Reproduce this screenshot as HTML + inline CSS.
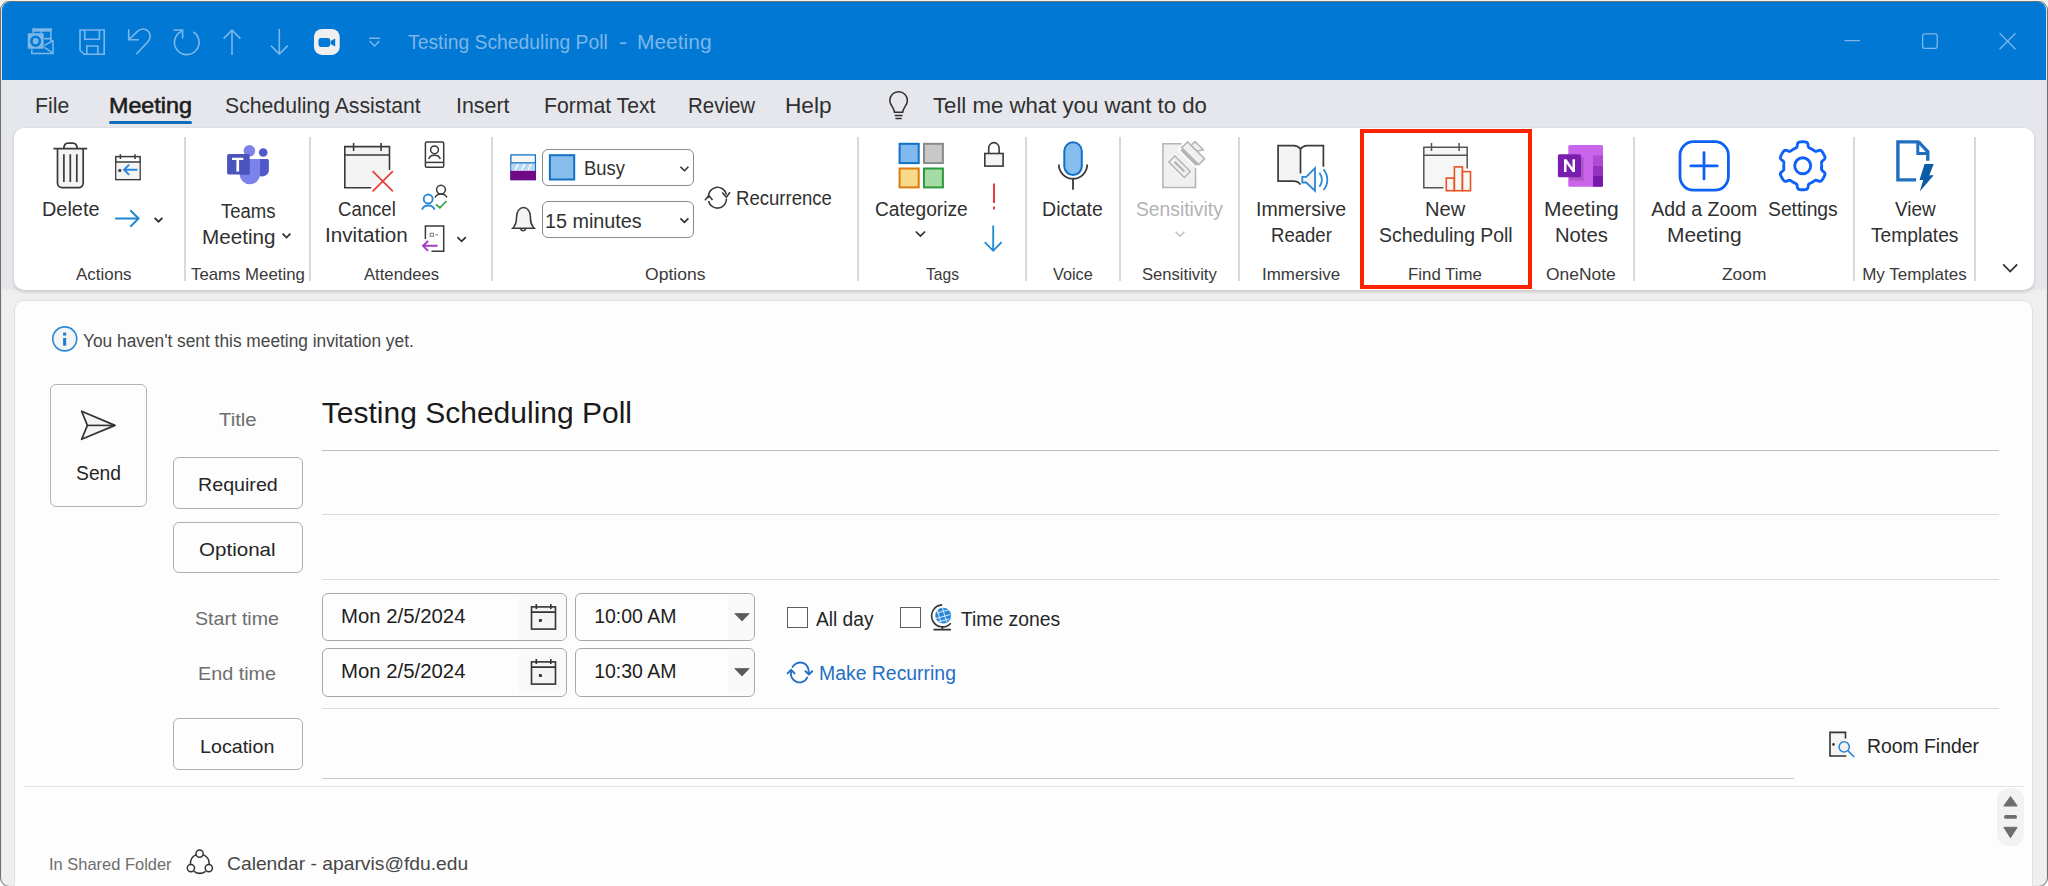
<!DOCTYPE html>
<html><head><meta charset="utf-8"><style>
html,body{margin:0;padding:0;}
body{width:2048px;height:886px;overflow:hidden;position:relative;background:#ffffff;font-family:"Liberation Sans", sans-serif;}
div,svg{box-sizing:border-box;}
</style></head><body>
<div style="position:absolute;left:0px;top:0px;width:2048px;height:3px;background:#f4f4f4;"></div><div style="position:absolute;left:0px;top:1px;width:2047.5px;height:886px;border:1.8px solid #707070;border-radius:9px;background:#e6e7ec;overflow:hidden;"></div><div style="position:absolute;left:1.8px;top:290px;width:2044px;height:594.5px;background:#efefef;border-radius:0 0 8px 8px;"></div><div style="position:absolute;left:2px;top:2px;width:2044px;height:78px;background:#0078d4;border-radius:8px 8px 0 0;"></div><div style="position:absolute;left:14px;top:128px;width:2019.5px;height:161.8px;background:#ffffff;border-radius:10px;box-shadow:0 1.5px 3.5px rgba(0,0,0,0.16);"></div><div style="position:absolute;left:14.4px;top:300.4px;width:2018.6px;height:600px;background:#fdfdfd;border:1px solid #e0e0e0;border-radius:10px;"></div><div style="position:absolute;left:407.57px;top:33.00px;font-size:19.5px;line-height:19.5px;white-space:nowrap;color:#7db6e9;font-weight:normal;transform:scaleX(0.9906);transform-origin:0 0;">Testing Scheduling Poll</div><div style="position:absolute;left:618.90px;top:33.00px;font-size:19.5px;line-height:19.5px;white-space:nowrap;color:#7db6e9;font-weight:normal;transform:scaleX(1.2559);transform-origin:0 0;">-</div><div style="position:absolute;left:637.27px;top:33.00px;font-size:19.5px;line-height:19.5px;white-space:nowrap;color:#7db6e9;font-weight:normal;transform:scaleX(1.0745);transform-origin:0 0;">Meeting</div><div style="position:absolute;left:34.85px;top:96.00px;font-size:21.5px;line-height:21.5px;white-space:nowrap;color:#303030;font-weight:normal;transform:scaleX(0.9866);transform-origin:0 0;">File</div><div style="position:absolute;left:109.08px;top:96.00px;font-size:21.5px;line-height:21.5px;white-space:nowrap;color:#1c1c1c;font-weight:normal;transform:scaleX(1.0836);transform-origin:0 0;-webkit-text-stroke:0.55px #1c1c1c;">Meeting</div><div style="position:absolute;left:109px;top:120.5px;width:83px;height:3.2px;background:#0f6cbd;border-radius:2px;"></div><div style="position:absolute;left:225.35px;top:96.00px;font-size:21.5px;line-height:21.5px;white-space:nowrap;color:#303030;font-weight:normal;transform:scaleX(0.9865);transform-origin:0 0;">Scheduling Assistant</div><div style="position:absolute;left:456.22px;top:96.00px;font-size:21.5px;line-height:21.5px;white-space:nowrap;color:#303030;font-weight:normal;transform:scaleX(0.9942);transform-origin:0 0;">Insert</div><div style="position:absolute;left:544.45px;top:96.00px;font-size:21.5px;line-height:21.5px;white-space:nowrap;color:#303030;font-weight:normal;transform:scaleX(0.9851);transform-origin:0 0;">Format Text</div><div style="position:absolute;left:688.31px;top:96.00px;font-size:21.5px;line-height:21.5px;white-space:nowrap;color:#303030;font-weight:normal;transform:scaleX(0.9520);transform-origin:0 0;">Review</div><div style="position:absolute;left:785.13px;top:96.00px;font-size:21.5px;line-height:21.5px;white-space:nowrap;color:#303030;font-weight:normal;transform:scaleX(1.0542);transform-origin:0 0;">Help</div><div style="position:absolute;left:932.50px;top:96.00px;font-size:21.5px;line-height:21.5px;white-space:nowrap;color:#303030;font-weight:normal;transform:scaleX(1.0323);transform-origin:0 0;">Tell me what you want to do</div><div style="position:absolute;left:184px;top:137px;width:2px;height:144px;background:#d9d9d9;"></div><div style="position:absolute;left:309px;top:137px;width:2px;height:144px;background:#d9d9d9;"></div><div style="position:absolute;left:491px;top:137px;width:2px;height:144px;background:#d9d9d9;"></div><div style="position:absolute;left:857px;top:137px;width:2px;height:144px;background:#d9d9d9;"></div><div style="position:absolute;left:1025px;top:137px;width:2px;height:144px;background:#d9d9d9;"></div><div style="position:absolute;left:1118.5px;top:137px;width:2px;height:144px;background:#d9d9d9;"></div><div style="position:absolute;left:1238.3px;top:137px;width:2px;height:144px;background:#d9d9d9;"></div><div style="position:absolute;left:1633.2px;top:137px;width:2px;height:144px;background:#d9d9d9;"></div><div style="position:absolute;left:1853px;top:137px;width:2px;height:144px;background:#d9d9d9;"></div><div style="position:absolute;left:1973.5px;top:137px;width:2px;height:144px;background:#d9d9d9;"></div><div style="position:absolute;left:41.86px;top:200.00px;font-size:19.5px;line-height:19.5px;white-space:nowrap;color:#303030;font-weight:normal;transform:scaleX(1.0201);transform-origin:0 0;">Delete</div><div style="position:absolute;left:220.78px;top:202.00px;font-size:19.5px;line-height:19.5px;white-space:nowrap;color:#303030;font-weight:normal;transform:scaleX(0.9502);transform-origin:0 0;">Teams</div><div style="position:absolute;left:202.00px;top:228.00px;font-size:19.5px;line-height:19.5px;white-space:nowrap;color:#303030;font-weight:normal;transform:scaleX(1.0595);transform-origin:0 0;">Meeting</div><div style="position:absolute;left:338.47px;top:200.00px;font-size:19.5px;line-height:19.5px;white-space:nowrap;color:#303030;font-weight:normal;transform:scaleX(0.9520);transform-origin:0 0;">Cancel</div><div style="position:absolute;left:325.09px;top:226.00px;font-size:19.5px;line-height:19.5px;white-space:nowrap;color:#303030;font-weight:normal;transform:scaleX(1.0596);transform-origin:0 0;">Invitation</div><div style="position:absolute;left:541.8px;top:148.6px;width:152.4px;height:37.6px;border:1.5px solid #8a8a8a;border-radius:6px;background:#fff;"></div><div style="position:absolute;left:541.8px;top:200.5px;width:152.4px;height:37.2px;border:1.5px solid #8a8a8a;border-radius:6px;background:#fff;"></div><div style="position:absolute;left:583.98px;top:159.00px;font-size:19.5px;line-height:19.5px;white-space:nowrap;color:#303030;font-weight:normal;transform:scaleX(0.9429);transform-origin:0 0;">Busy</div><div style="position:absolute;left:545.02px;top:212.00px;font-size:19.5px;line-height:19.5px;white-space:nowrap;color:#303030;font-weight:normal;transform:scaleX(1.0133);transform-origin:0 0;">15 minutes</div><div style="position:absolute;left:736.47px;top:189.00px;font-size:19.5px;line-height:19.5px;white-space:nowrap;color:#303030;font-weight:normal;transform:scaleX(0.9519);transform-origin:0 0;">Recurrence</div><div style="position:absolute;left:874.84px;top:200.00px;font-size:19.5px;line-height:19.5px;white-space:nowrap;color:#303030;font-weight:normal;transform:scaleX(0.9829);transform-origin:0 0;">Categorize</div><div style="position:absolute;left:1042.09px;top:200.00px;font-size:19.5px;line-height:19.5px;white-space:nowrap;color:#303030;font-weight:normal;">Dictate</div><div style="position:absolute;left:1135.93px;top:200.00px;font-size:19.5px;line-height:19.5px;white-space:nowrap;color:#b3b3b3;font-weight:normal;transform:scaleX(0.9888);transform-origin:0 0;">Sensitivity</div><div style="position:absolute;left:1256.09px;top:200.00px;font-size:19.5px;line-height:19.5px;white-space:nowrap;color:#303030;font-weight:normal;">Immersive</div><div style="position:absolute;left:1271.37px;top:226.00px;font-size:19.5px;line-height:19.5px;white-space:nowrap;color:#303030;font-weight:normal;transform:scaleX(0.9507);transform-origin:0 0;">Reader</div><div style="position:absolute;left:1424.94px;top:200.00px;font-size:19.5px;line-height:19.5px;white-space:nowrap;color:#303030;font-weight:normal;transform:scaleX(1.0310);transform-origin:0 0;">New</div><div style="position:absolute;left:1378.93px;top:226.00px;font-size:19.5px;line-height:19.5px;white-space:nowrap;color:#303030;font-weight:normal;transform:scaleX(0.9943);transform-origin:0 0;">Scheduling Poll</div><div style="position:absolute;left:1544.17px;top:200.00px;font-size:19.5px;line-height:19.5px;white-space:nowrap;color:#303030;font-weight:normal;transform:scaleX(1.0775);transform-origin:0 0;">Meeting</div><div style="position:absolute;left:1555.33px;top:226.00px;font-size:19.5px;line-height:19.5px;white-space:nowrap;color:#303030;font-weight:normal;transform:scaleX(1.0380);transform-origin:0 0;">Notes</div><div style="position:absolute;left:1651.15px;top:200.00px;font-size:19.5px;line-height:19.5px;white-space:nowrap;color:#303030;font-weight:normal;">Add a Zoom</div><div style="position:absolute;left:1666.77px;top:226.00px;font-size:19.5px;line-height:19.5px;white-space:nowrap;color:#303030;font-weight:normal;transform:scaleX(1.0745);transform-origin:0 0;">Meeting</div><div style="position:absolute;left:1768.13px;top:200.00px;font-size:19.5px;line-height:19.5px;white-space:nowrap;color:#303030;font-weight:normal;transform:scaleX(0.9901);transform-origin:0 0;">Settings</div><div style="position:absolute;left:1894.91px;top:200.00px;font-size:19.5px;line-height:19.5px;white-space:nowrap;color:#303030;font-weight:normal;transform:scaleX(0.9719);transform-origin:0 0;">View</div><div style="position:absolute;left:1871.27px;top:226.00px;font-size:19.5px;line-height:19.5px;white-space:nowrap;color:#303030;font-weight:normal;transform:scaleX(0.9835);transform-origin:0 0;">Templates</div><div style="position:absolute;left:75.66px;top:266.00px;font-size:17px;line-height:17px;white-space:nowrap;color:#3a3a3a;font-weight:normal;transform:scaleX(0.9960);transform-origin:0 0;">Actions</div><div style="position:absolute;left:191.22px;top:266.00px;font-size:17px;line-height:17px;white-space:nowrap;color:#3a3a3a;font-weight:normal;transform:scaleX(0.9876);transform-origin:0 0;">Teams Meeting</div><div style="position:absolute;left:363.76px;top:266.00px;font-size:17px;line-height:17px;white-space:nowrap;color:#3a3a3a;font-weight:normal;transform:scaleX(0.9802);transform-origin:0 0;">Attendees</div><div style="position:absolute;left:645.17px;top:266.00px;font-size:17px;line-height:17px;white-space:nowrap;color:#3a3a3a;font-weight:normal;transform:scaleX(1.0314);transform-origin:0 0;">Options</div><div style="position:absolute;left:925.55px;top:266.00px;font-size:17px;line-height:17px;white-space:nowrap;color:#3a3a3a;font-weight:normal;transform:scaleX(0.9188);transform-origin:0 0;">Tags</div><div style="position:absolute;left:1052.92px;top:266.00px;font-size:17px;line-height:17px;white-space:nowrap;color:#3a3a3a;font-weight:normal;transform:scaleX(0.9569);transform-origin:0 0;">Voice</div><div style="position:absolute;left:1142.25px;top:266.00px;font-size:17px;line-height:17px;white-space:nowrap;color:#3a3a3a;font-weight:normal;transform:scaleX(0.9771);transform-origin:0 0;">Sensitivity</div><div style="position:absolute;left:1261.83px;top:266.00px;font-size:17px;line-height:17px;white-space:nowrap;color:#3a3a3a;font-weight:normal;transform:scaleX(0.9964);transform-origin:0 0;">Immersive</div><div style="position:absolute;left:1408.31px;top:266.00px;font-size:17px;line-height:17px;white-space:nowrap;color:#3a3a3a;font-weight:normal;transform:scaleX(0.9903);transform-origin:0 0;">Find Time</div><div style="position:absolute;left:1546.07px;top:266.00px;font-size:17px;line-height:17px;white-space:nowrap;color:#3a3a3a;font-weight:normal;transform:scaleX(1.0239);transform-origin:0 0;">OneNote</div><div style="position:absolute;left:1721.78px;top:266.00px;font-size:17px;line-height:17px;white-space:nowrap;color:#3a3a3a;font-weight:normal;transform:scaleX(1.0210);transform-origin:0 0;">Zoom</div><div style="position:absolute;left:1862.20px;top:266.00px;font-size:17px;line-height:17px;white-space:nowrap;color:#3a3a3a;font-weight:normal;">My Templates</div><div style="position:absolute;left:1360px;top:129px;width:171.5px;height:160px;border:4px solid #ff2200;"></div><div style="position:absolute;left:82.51px;top:332.00px;font-size:18px;line-height:18px;white-space:nowrap;color:#474747;font-weight:normal;transform:scaleX(0.9615);transform-origin:0 0;">You haven't sent this meeting invitation yet.</div><div style="position:absolute;left:50px;top:384.2px;width:97px;height:122.8px;border:1.5px solid #b4b4b4;border-radius:6px;background:#fdfdfd;"></div><div style="position:absolute;left:76.13px;top:464.00px;font-size:19.5px;line-height:19.5px;white-space:nowrap;color:#262626;font-weight:normal;transform:scaleX(0.9900);transform-origin:0 0;">Send</div><div style="position:absolute;left:219.24px;top:410.00px;font-size:19px;line-height:19px;white-space:nowrap;color:#6e6e6e;font-weight:normal;transform:scaleX(1.0703);transform-origin:0 0;">Title</div><div style="position:absolute;left:321.83px;top:398.00px;font-size:30px;line-height:30px;white-space:nowrap;color:#1a1a1a;font-weight:normal;">Testing Scheduling Poll</div><div style="position:absolute;left:322px;top:449.6px;width:1677px;height:1.4px;background:#bfbfbf;"></div><div style="position:absolute;left:173px;top:456.8px;width:129.5px;height:51.80000000000003px;border:1.5px solid #b0b0b0;border-radius:6px;background:#fdfdfd;"></div><div style="position:absolute;left:197.78px;top:475.00px;font-size:19px;line-height:19px;white-space:nowrap;color:#262626;font-weight:normal;transform:scaleX(1.0345);transform-origin:0 0;">Required</div><div style="position:absolute;left:173px;top:521.5px;width:129.5px;height:51.799999999999976px;border:1.5px solid #b0b0b0;border-radius:6px;background:#fdfdfd;"></div><div style="position:absolute;left:199.42px;top:540.00px;font-size:19px;line-height:19px;white-space:nowrap;color:#262626;font-weight:normal;transform:scaleX(1.0818);transform-origin:0 0;">Optional</div><div style="position:absolute;left:173px;top:718.4px;width:129.5px;height:51.50000000000002px;border:1.5px solid #b0b0b0;border-radius:6px;background:#fdfdfd;"></div><div style="position:absolute;left:200.38px;top:737.00px;font-size:19px;line-height:19px;white-space:nowrap;color:#262626;font-weight:normal;transform:scaleX(1.0353);transform-origin:0 0;">Location</div><div style="position:absolute;left:322px;top:514.2px;width:1677px;height:1.2px;background:#dcdcdc;"></div><div style="position:absolute;left:322px;top:578.9px;width:1677px;height:1.2px;background:#dcdcdc;"></div><div style="position:absolute;left:195.22px;top:609.00px;font-size:19px;line-height:19px;white-space:nowrap;color:#6e6e6e;font-weight:normal;transform:scaleX(1.0325);transform-origin:0 0;">Start time</div><div style="position:absolute;left:197.97px;top:664.00px;font-size:19px;line-height:19px;white-space:nowrap;color:#6e6e6e;font-weight:normal;transform:scaleX(1.0416);transform-origin:0 0;">End time</div><div style="position:absolute;left:322.2px;top:593px;width:245.1px;height:48.2px;border:1.5px solid #a8a8a8;border-radius:6px;background:#fdfdfd;"></div><div style="position:absolute;left:519px;top:594.5px;width:46.8px;height:45.2px;background:#f9f9f9;border-radius:0 5px 5px 0;"></div><div style="position:absolute;left:575px;top:593px;width:180.1px;height:48.2px;border:1.5px solid #a8a8a8;border-radius:6px;background:#fdfdfd;"></div><div style="position:absolute;left:728px;top:594.5px;width:25.6px;height:45.2px;background:#f9f9f9;border-radius:0 5px 5px 0;"></div><div style="position:absolute;left:322.2px;top:648.4px;width:245.1px;height:48.2px;border:1.5px solid #a8a8a8;border-radius:6px;background:#fdfdfd;"></div><div style="position:absolute;left:519px;top:649.9px;width:46.8px;height:45.2px;background:#f9f9f9;border-radius:0 5px 5px 0;"></div><div style="position:absolute;left:575px;top:648.4px;width:180.1px;height:48.2px;border:1.5px solid #a8a8a8;border-radius:6px;background:#fdfdfd;"></div><div style="position:absolute;left:728px;top:649.9px;width:25.6px;height:45.2px;background:#f9f9f9;border-radius:0 5px 5px 0;"></div><div style="position:absolute;left:341.22px;top:607.00px;font-size:19.5px;line-height:19.5px;white-space:nowrap;color:#1e1e1e;font-weight:normal;transform:scaleX(1.0436);transform-origin:0 0;">Mon 2/5/2024</div><div style="position:absolute;left:594.14px;top:607.00px;font-size:19.5px;line-height:19.5px;white-space:nowrap;color:#1e1e1e;font-weight:normal;">10:00 AM</div><div style="position:absolute;left:341.22px;top:662.00px;font-size:19.5px;line-height:19.5px;white-space:nowrap;color:#1e1e1e;font-weight:normal;transform:scaleX(1.0436);transform-origin:0 0;">Mon 2/5/2024</div><div style="position:absolute;left:594.14px;top:662.00px;font-size:19.5px;line-height:19.5px;white-space:nowrap;color:#1e1e1e;font-weight:normal;">10:30 AM</div><div style="position:absolute;left:786.9px;top:606.8px;width:21.1px;height:20.9px;border:1.3px solid #5e5e5e;background:#fff;"></div><div style="position:absolute;left:899.9px;top:606.8px;width:21.1px;height:20.9px;border:1.3px solid #5e5e5e;background:#fff;"></div><div style="position:absolute;left:815.85px;top:610.00px;font-size:19.5px;line-height:19.5px;white-space:nowrap;color:#262626;font-weight:normal;transform:scaleX(0.9820);transform-origin:0 0;">All day</div><div style="position:absolute;left:960.77px;top:610.00px;font-size:19.5px;line-height:19.5px;white-space:nowrap;color:#262626;font-weight:normal;transform:scaleX(0.9903);transform-origin:0 0;">Time zones</div><div style="position:absolute;left:818.80px;top:664.00px;font-size:19.5px;line-height:19.5px;white-space:nowrap;color:#1f6fc5;font-weight:normal;transform:scaleX(0.9949);transform-origin:0 0;">Make Recurring</div><div style="position:absolute;left:322px;top:708.1px;width:1677px;height:1.2px;background:#dcdcdc;"></div><div style="position:absolute;left:322px;top:777.9px;width:1472px;height:1.3px;background:#c9c9c9;"></div><div style="position:absolute;left:24px;top:785.8px;width:2000px;height:1.2px;background:#e3e3e3;"></div><div style="position:absolute;left:1867.00px;top:737.00px;font-size:19.5px;line-height:19.5px;white-space:nowrap;color:#262626;font-weight:normal;transform:scaleX(0.9927);transform-origin:0 0;">Room Finder</div><div style="position:absolute;left:1996.5px;top:788px;width:27.5px;height:58px;background:#f2f2f2;border-radius:12px;"></div><div style="position:absolute;left:49.28px;top:856.00px;font-size:17px;line-height:17px;white-space:nowrap;color:#6e6e6e;font-weight:normal;transform:scaleX(0.9681);transform-origin:0 0;">In Shared Folder</div><div style="position:absolute;left:226.94px;top:854.00px;font-size:19px;line-height:19px;white-space:nowrap;color:#474747;font-weight:normal;transform:scaleX(1.0140);transform-origin:0 0;">Calendar - aparvis@fdu.edu</div><svg style="position:absolute;left:0;top:0" width="2048" height="886" viewBox="0 0 2048 886"><g fill="#7db7ea">
<rect x="32.5" y="28.3" width="19.1" height="3.4"/>
<rect x="32.5" y="28.3" width="1.5" height="6"/>
<rect x="50.1" y="28.3" width="1.5" height="12"/>
<rect x="40.3" y="31" width="1.7" height="3"/>
<rect x="43.7" y="37.8" width="8" height="1.7"/>
</g>
<path d="M31.8 48 V53.4 H53 V40.8 H50.5" fill="none" stroke="#7db7ea" stroke-width="1.5"/>
<path d="M44 45.6 L52.6 41 M44 47.2 L52.6 52.8" stroke="#7db7ea" stroke-width="1.5"/>
<rect x="27.2" y="32.8" width="17" height="16.5" fill="#0078d4"/>
<rect x="27.7" y="33.3" width="16" height="15.5" rx="0.6" fill="#7db7ea"/>
<ellipse cx="35.6" cy="41.2" rx="4.2" ry="4.4" fill="none" stroke="#0078d4" stroke-width="2.6"/>
<g fill="none" stroke="#7db7ea" stroke-width="1.6">
<path d="M80 30 H104.2 V54.2 H84 L80 50 Z"/>
<path d="M84.7 30 V39.3 H99.4 V30"/>
<path d="M86.8 54.2 V46 H97.8 V54.2"/>
<path d="M128.7 29.2 V39.8 H139"/>
<path d="M129.4 39 L137.5 31.3 C141 28 146 28.3 148.7 31.8 C151 35 150.4 39.2 148 41.6 L136.3 54.3"/>
<path d="M173.3 30 H182.6 V38.6"/>
<path d="M181.6 31.2 A12.3 12.3 0 1 0 193.4 32"/>
<path d="M232 55 V30.2 M223.6 38.6 L232 30.2 L240.4 38.6"/>
<path d="M279.3 29 V54 M270.9 45.6 L279.3 54 L287.7 45.6"/>
<path d="M369 38.2 H380 M369.6 41 L374.5 45.9 L379.4 41" stroke-width="1.4"/>
<path d="M1844.4 40.6 H1860" stroke-width="1.3"/>
<rect x="1922.6" y="33.9" width="14.6" height="14.4" rx="2" stroke-width="1.3"/>
<path d="M1999.6 33.3 L2015.5 49.2 M2015.5 33.3 L1999.6 49.2" stroke-width="1.3"/>
</g><rect x="314" y="29" width="25.7" height="25.9" rx="8" fill="#efeff0"/>
<rect x="318.5" y="38" width="11.7" height="9" rx="2.4" fill="#0078d4"/>
<path d="M330.6 41 L335.2 38.4 V46.6 L330.6 44 Z" fill="#0078d4"/><g fill="none" stroke="#2e2e2e" stroke-width="1.5">
<path d="M894.5 112.3 C894.5 108 889.8 105.5 889.8 100.5 A8.8 8.8 0 0 1 907.4 100.5 C907.4 105.5 902.7 108 902.7 112.3 Z"/>
<path d="M894.7 115.6 H902.5 M895.5 118.4 H901.7"/>
</g><g stroke="#3a3a3a" stroke-width="1.7" fill="none">
<path d="M57.5 149 V183 A4.5 4.5 0 0 0 62 187.6 H78.6 A4.5 4.5 0 0 0 83.2 183 V149" fill="#f4f4f4"/>
<path d="M53.4 148.7 H87.2"/>
<path d="M63.8 148.7 C64 143.8 66 143.1 68 143.1 H72.8 C75 143.1 77 143.8 77.2 148.7"/>
<path d="M63.9 154.2 V182 M70.3 154.2 V182 M76.8 154.2 V182"/>
</g>
<g stroke="#3a3a3a" stroke-width="1.5" fill="none">
<rect x="115.8" y="156.6" width="24.3" height="23" fill="#fff"/>
<rect x="116.6" y="162.8" width="22.7" height="16" fill="#f4f4f4" stroke="none"/>
<path d="M115.8 162 H140.1 M120.4 154.2 V159 M135 154.2 V159"/>
</g>
<rect x="118.4" y="169.1" width="2.8" height="2.8" fill="#3a3a3a"/>
<path d="M137.4 169.7 H124 M129.2 164.6 L124 169.7 L129.2 174.9" stroke="#2b88d8" stroke-width="1.9" fill="none"/>
<path d="M115.1 218.5 H138.4 M130.3 210.3 L138.6 218.5 L130.3 226.7" stroke="#1e88d4" stroke-width="1.9" fill="none"/>
<path d="M154.6 217.8 L158.5 221.7 L162.4 217.8" stroke="#2e2e2e" stroke-width="1.8" fill="none"/>
<circle cx="249.4" cy="150.8" r="5.8" fill="#7b83eb"/>
<circle cx="263.2" cy="152.5" r="4.3" fill="#5059c9"/>
<path d="M258 159 H267.4 A1.5 1.5 0 0 1 268.9 160.5 V170 A6.7 6.7 0 0 1 258 175 Z" fill="#5059c9"/>
<path d="M239.6 159 H260.1 V173.9 A10.25 10.4 0 0 1 239.6 173.9 Z" fill="#7b83eb"/>
<path d="M239.6 159 H249.7 V174.6 H239.6 Z" fill="#5a62c8" opacity="0.85"/>
<rect x="227.1" y="153.9" width="22.6" height="20.7" rx="1.6" fill="#4b53bc"/>
<path d="M232 157.8 H243.3 V160.1 H239.1 V171.5 H236.4 V160.1 H232 Z" fill="#fff"/>
<path d="M282.6 233.6 L286.5 237.5 L290.4 233.6" stroke="#2e2e2e" stroke-width="1.7" fill="none"/><g stroke="#3a3a3a" stroke-width="1.6" fill="none">
<path d="M389.5 169.9 V146.6 H344.8 V187.8 H371.2" fill="#f4f4f4"/>
<path d="M344.8 155 H389.5 M353.6 143 V150.9 M381.1 143 V150.9"/>
</g>
<path d="M372.6 171.2 L392.9 191.3 M392.9 171.2 L372.6 191.3" stroke="#e8403a" stroke-width="1.8"/>
<g stroke="#3a3a3a" stroke-width="1.5" fill="none">
<rect x="425.4" y="141.9" width="18.3" height="25.3" rx="1.3"/>
<path d="M425.4 162.4 H443.7"/>
<circle cx="434.5" cy="149.8" r="3.9"/>
<path d="M428.7 159 A6 5.2 0 0 1 440.3 159"/>
<circle cx="441" cy="189.6" r="4.4"/>
<path d="M435 197.5 A6.5 5.5 0 0 1 447 197.5"/>
<path d="M431.5 251.2 H443.7 V226.1 H425.4 V239"/>
</g>
<rect x="430.1" y="233.3" width="3.4" height="3" fill="none" stroke="#8a8a8a" stroke-width="1.1"/>
<path d="M435.3 234.8 H438" stroke="#8a8a8a" stroke-width="1.1"/>
<g stroke="#2b88d8" stroke-width="1.9" fill="none">
<circle cx="428.2" cy="199" r="4.5"/>
<path d="M422 209.6 A6.6 5.8 0 0 1 434.6 209.6"/>
</g>
<path d="M435.8 204.4 L439.9 207.8 L446.4 201" stroke="#3fa24a" stroke-width="1.8" fill="none"/>
<path d="M437.6 245.8 H423 M428.1 241 L423 245.8 L428.1 250.9" stroke="#a53dc3" stroke-width="1.9" fill="none"/>
<path d="M457.4 237.2 L461.6 241.4 L465.8 237.2" stroke="#2e2e2e" stroke-width="1.7" fill="none"/>
<rect x="510.9" y="154.9" width="24.5" height="24.7" fill="#f8f8f8" stroke="#1170c8" stroke-width="1.3"/>
<rect x="511.5" y="163" width="23.3" height="7.3" fill="#b5d6f3"/>
<path d="M515 170 L518.5 163.6 M521.5 170 L525 163.6 M528 170 L531.5 163.6" stroke="#fff" stroke-width="1.4"/>
<path d="M510.9 162.8 H535.4" stroke="#1170c8" stroke-width="1.2"/>
<rect x="510.3" y="170.8" width="25.7" height="9.4" fill="#6f0a84"/>
<rect x="549.9" y="155.2" width="24.3" height="24.3" fill="#88beec" stroke="#1170c8" stroke-width="2"/>
<path d="M680.4 166.7 L684.4 170.7 L688.4 166.7 M680.4 218.4 L684.4 222.4 L688.4 218.4" stroke="#2e2e2e" stroke-width="1.6" fill="none"/>
<g stroke="#3a3a3a" stroke-width="1.6" fill="#f4f4f4">
<path d="M512.8 228.2 H534.3 C530.5 224.5 530.4 221 530.4 216.5 A6.9 9 0 0 0 516.6 216.5 C516.6 221 516.5 224.5 512.8 228.2 Z"/>
<path d="M520.5 229 A3 3 0 0 0 525.8 229" fill="none"/>
</g>
<g stroke="#3a3a3a" stroke-width="1.6" fill="none">
<path d="M708.6 198 A9 9 0 0 1 726.3 194.5"/>
<path d="M722.3 192.6 L726.3 197.3 L730 192.3"/>
<path d="M726.4 198.8 A9 9 0 0 1 708.6 201"/>
<path d="M705 200.2 L708.8 195.5 L712.5 200"/>
</g>
<rect x="899.6" y="143.8" width="19.1" height="19.3" fill="#80b9ee" stroke="#1170c8" stroke-width="2"/>
<rect x="924" y="143.8" width="18.9" height="19.3" fill="#c8c8c8" stroke="#8a8a8a" stroke-width="2"/>
<rect x="899.6" y="168.5" width="19.1" height="18.9" fill="#f8d98a" stroke="#e07a10" stroke-width="2"/>
<rect x="924" y="168.5" width="18.9" height="18.9" fill="#a5dba5" stroke="#2e9a3e" stroke-width="2"/>
<path d="M915.8 231.5 L920.4 236.1 L925 231.5" stroke="#2e2e2e" stroke-width="1.7" fill="none"/>
<g stroke="#3a3a3a" stroke-width="1.6" fill="none">
<path d="M988.7 153.5 V148.2 A5.2 5.6 0 0 1 999.1 148.2 V153.5"/>
<rect x="984.8" y="153.5" width="18.3" height="12.6" fill="#f4f4f4"/>
</g>
<path d="M994 183.6 V203" stroke="#e8303a" stroke-width="1.9"/>
<rect x="993" y="206.6" width="2" height="2.8" fill="#e8303a"/>
<path d="M993.2 225.5 V251 M984.8 242.2 L993.2 250.8 L1001.6 242.2" stroke="#1e88d4" stroke-width="1.8" fill="none"/>
<rect x="1064.3" y="142.3" width="17.5" height="32.7" rx="8.75" fill="#85bdec" stroke="#1170c8" stroke-width="2"/>
<path d="M1058.8 164.5 A14.2 14.2 0 0 0 1087.2 164.5 M1073 179.5 V189.7" stroke="#3a3a3a" stroke-width="1.8" fill="none"/>
<path d="M1181.5 143.8 H1162.9 V187.5 H1195.5 V167.5" fill="#f0f0f0" stroke="#b5b5b5" stroke-width="1.6"/>
<g transform="translate(1179.6 166.8) rotate(-45)">
<path d="M-6 -13 H31 V13 H-6 Z" fill="#fff" transform="translate(0 0)" opacity="0"/>
<rect x="-5.8" y="-12.5" width="11.6" height="25" fill="#fff"/>
<rect x="10.5" y="-13.5" width="20" height="27" fill="#fff"/>
<rect x="-4.3" y="-11" width="8.6" height="22" fill="#f0f0f0" stroke="#b5b5b5" stroke-width="1.6"/>
<path d="M0 -7 V7" stroke="#b5b5b5" stroke-width="2.2"/>
<rect x="12" y="-11" width="3" height="22" fill="#b5b5b5"/>
<rect x="15" y="-12" width="8.4" height="24" fill="#f0f0f0" stroke="#b5b5b5" stroke-width="1.6"/>
<path d="M23.4 -7 H28.8 V5 L23.4 1 Z" fill="#f0f0f0" stroke="#b5b5b5" stroke-width="1.6" stroke-linejoin="round"/>
</g>
<path d="M1175.6 231.8 L1180 236.2 L1184.4 231.8" stroke="#c0c0c0" stroke-width="1.5" fill="none"/>
<g stroke="#3a3a3a" stroke-width="1.7" fill="#f4f4f4">
<path d="M1300.5 173.5 V149 C1298.5 146.5 1296.5 145.6 1294 145.6 H1278.1 V181.2 H1293.5 C1296.5 181.2 1299 182.3 1300.3 184.6"/>
<path d="M1300.5 149 C1302.5 146.5 1304.5 145.6 1307 145.6 H1323.4 V166.8" fill="none"/>
</g>
<g stroke="#2b88d8" stroke-width="1.8" fill="none">
<path d="M1302.3 176.8 H1306.2 L1315 168.2 V190.8 L1306.2 182.5 H1302.3 Z" fill="#f4f4f4"/>
<path d="M1319.4 172.8 A11 11 0 0 1 1319.4 186.8"/>
<path d="M1323.5 169.3 A16 16 0 0 1 1323.5 190"/>
</g>
<g stroke="#555" stroke-width="1.5" fill="none">
<path d="M1467.2 168.5 V147.2 H1423.8 V187.8 H1443.4" fill="#f6f6f6"/>
<path d="M1423.8 155.3 H1467.2 M1431.5 143.1 V150.9 M1459.1 143.1 V150.9"/>
</g>
<g stroke="#e8531e" stroke-width="1.6" fill="#f6f6f6">
<rect x="1446.3" y="178.1" width="8" height="12.6"/>
<rect x="1454.4" y="166.9" width="8" height="23.8"/>
<rect x="1462.5" y="171.6" width="8" height="19.1"/>
</g><rect x="1568.3" y="145" width="34.7" height="41.8" rx="1.6" fill="#ca64ea"/>
<rect x="1593" y="155.4" width="10" height="10.6" fill="#ae4bd5"/>
<rect x="1593" y="166" width="10" height="10.1" fill="#9332bf"/>
<path d="M1593 176.1 H1603 V185.2 A1.6 1.6 0 0 1 1601.4 186.8 H1593 Z" fill="#7719aa"/>
<rect x="1568.3" y="156" width="14.5" height="23.5" fill="#000" opacity="0.12" transform="translate(1 1.2)"/>
<rect x="1557.9" y="154.2" width="23.2" height="23.1" rx="1.6" fill="#7a1eb0"/>
<path d="M1564 172.1 V159.3 H1566.5 L1572.5 167.8 V159.3 H1575 V172.1 H1572.5 L1566.5 163.6 V172.1 Z" fill="#fff"/>
<rect x="1680" y="141.7" width="48.4" height="48.4" rx="13.5" fill="none" stroke="#0e61f6" stroke-width="2.8"/>
<path d="M1690.8 165.9 H1717.2 M1704 152.6 V179.1" stroke="#0e61f6" stroke-width="2.8" stroke-linecap="round"/>
<path d="M1821.70 165.80 L1821.70 165.63 L1821.70 165.47 L1821.69 165.30 L1821.69 165.14 L1821.68 164.97 L1821.67 164.81 L1821.67 164.64 L1821.66 164.47 L1821.65 164.31 L1821.63 164.14 L1821.62 163.98 L1821.61 163.81 L1821.59 163.65 L1821.58 163.48 L1821.57 163.32 L1821.56 163.15 L1821.55 162.98 L1821.54 162.82 L1821.54 162.65 L1821.55 162.48 L1821.56 162.30 L1821.59 162.13 L1821.65 161.95 L1821.72 161.76 L1821.84 161.56 L1821.99 161.35 L1822.19 161.12 L1822.45 160.88 L1822.75 160.62 L1823.08 160.34 L1823.44 160.05 L1823.78 159.75 L1824.10 159.46 L1824.38 159.17 L1824.60 158.89 L1824.77 158.63 L1824.89 158.38 L1824.96 158.13 L1825.00 157.90 L1825.01 157.68 L1825.00 157.46 L1824.97 157.25 L1824.93 157.04 L1824.87 156.84 L1824.81 156.64 L1824.75 156.44 L1824.67 156.25 L1824.60 156.05 L1824.52 155.86 L1824.43 155.67 L1824.35 155.47 L1824.26 155.28 L1824.17 155.10 L1824.08 154.91 L1823.98 154.72 L1823.89 154.53 L1823.79 154.35 L1823.69 154.17 L1823.59 153.98 L1823.48 153.80 L1823.38 153.62 L1823.27 153.44 L1823.16 153.26 L1823.05 153.08 L1822.94 152.91 L1822.82 152.73 L1822.71 152.56 L1822.59 152.39 L1822.47 152.21 L1822.34 152.04 L1822.22 151.88 L1822.09 151.71 L1821.96 151.55 L1821.83 151.39 L1821.69 151.23 L1821.55 151.08 L1821.40 150.93 L1821.24 150.79 L1821.07 150.66 L1820.89 150.54 L1820.69 150.44 L1820.47 150.35 L1820.22 150.30 L1819.94 150.27 L1819.63 150.29 L1819.28 150.34 L1818.89 150.43 L1818.48 150.56 L1818.05 150.72 L1817.62 150.88 L1817.21 151.03 L1816.84 151.16 L1816.50 151.26 L1816.20 151.32 L1815.94 151.35 L1815.71 151.35 L1815.51 151.32 L1815.33 151.27 L1815.16 151.21 L1815.00 151.14 L1814.85 151.06 L1814.70 150.98 L1814.56 150.89 L1814.42 150.80 L1814.29 150.70 L1814.15 150.61 L1814.01 150.51 L1813.88 150.42 L1813.74 150.32 L1813.60 150.23 L1813.46 150.14 L1813.33 150.05 L1813.19 149.96 L1813.05 149.87 L1812.91 149.78 L1812.77 149.69 L1812.63 149.60 L1812.49 149.51 L1812.34 149.43 L1812.20 149.35 L1812.06 149.26 L1811.91 149.18 L1811.77 149.10 L1811.62 149.02 L1811.47 148.95 L1811.33 148.87 L1811.18 148.80 L1811.03 148.72 L1810.88 148.65 L1810.73 148.57 L1810.58 148.50 L1810.43 148.43 L1810.28 148.36 L1810.13 148.29 L1809.98 148.22 L1809.83 148.15 L1809.68 148.07 L1809.54 147.99 L1809.39 147.91 L1809.24 147.82 L1809.10 147.72 L1808.97 147.60 L1808.83 147.46 L1808.71 147.30 L1808.59 147.11 L1808.49 146.87 L1808.39 146.58 L1808.31 146.24 L1808.23 145.85 L1808.16 145.42 L1808.09 144.97 L1808.01 144.52 L1807.91 144.09 L1807.80 143.71 L1807.67 143.38 L1807.52 143.10 L1807.36 142.87 L1807.19 142.69 L1807.01 142.54 L1806.82 142.42 L1806.63 142.32 L1806.43 142.24 L1806.23 142.17 L1806.03 142.12 L1805.82 142.07 L1805.62 142.03 L1805.41 141.99 L1805.21 141.96 L1805.00 141.93 L1804.79 141.91 L1804.58 141.89 L1804.37 141.87 L1804.16 141.85 L1803.96 141.84 L1803.75 141.83 L1803.54 141.82 L1803.33 141.81 L1803.12 141.81 L1802.91 141.80 L1802.70 141.80 L1802.49 141.80 L1802.28 141.81 L1802.07 141.81 L1801.86 141.82 L1801.65 141.83 L1801.44 141.84 L1801.24 141.85 L1801.03 141.87 L1800.82 141.89 L1800.61 141.91 L1800.40 141.93 L1800.19 141.96 L1799.99 141.99 L1799.78 142.03 L1799.58 142.07 L1799.37 142.12 L1799.17 142.17 L1798.97 142.24 L1798.77 142.32 L1798.58 142.42 L1798.39 142.54 L1798.21 142.69 L1798.04 142.87 L1797.88 143.10 L1797.73 143.38 L1797.60 143.71 L1797.49 144.09 L1797.39 144.52 L1797.31 144.97 L1797.24 145.42 L1797.17 145.85 L1797.09 146.24 L1797.01 146.58 L1796.91 146.87 L1796.81 147.11 L1796.69 147.30 L1796.57 147.46 L1796.43 147.60 L1796.30 147.72 L1796.16 147.82 L1796.01 147.91 L1795.86 147.99 L1795.72 148.07 L1795.57 148.15 L1795.42 148.22 L1795.27 148.29 L1795.12 148.36 L1794.97 148.43 L1794.82 148.50 L1794.67 148.57 L1794.52 148.65 L1794.37 148.72 L1794.22 148.80 L1794.07 148.87 L1793.93 148.95 L1793.78 149.02 L1793.63 149.10 L1793.49 149.18 L1793.34 149.26 L1793.20 149.35 L1793.06 149.43 L1792.91 149.51 L1792.77 149.60 L1792.63 149.69 L1792.49 149.78 L1792.35 149.87 L1792.21 149.96 L1792.07 150.05 L1791.94 150.14 L1791.80 150.23 L1791.66 150.32 L1791.52 150.42 L1791.39 150.51 L1791.25 150.61 L1791.11 150.70 L1790.98 150.80 L1790.84 150.89 L1790.70 150.98 L1790.55 151.06 L1790.40 151.14 L1790.24 151.21 L1790.07 151.27 L1789.89 151.32 L1789.69 151.35 L1789.46 151.35 L1789.20 151.32 L1788.90 151.26 L1788.56 151.16 L1788.19 151.03 L1787.78 150.88 L1787.35 150.72 L1786.92 150.56 L1786.51 150.43 L1786.12 150.34 L1785.77 150.29 L1785.46 150.27 L1785.18 150.30 L1784.93 150.35 L1784.71 150.44 L1784.51 150.54 L1784.33 150.66 L1784.16 150.79 L1784.00 150.93 L1783.85 151.08 L1783.71 151.23 L1783.57 151.39 L1783.44 151.55 L1783.31 151.71 L1783.18 151.88 L1783.06 152.04 L1782.93 152.21 L1782.81 152.39 L1782.69 152.56 L1782.58 152.73 L1782.46 152.91 L1782.35 153.08 L1782.24 153.26 L1782.13 153.44 L1782.02 153.62 L1781.92 153.80 L1781.81 153.98 L1781.71 154.17 L1781.61 154.35 L1781.51 154.53 L1781.42 154.72 L1781.32 154.91 L1781.23 155.10 L1781.14 155.28 L1781.05 155.47 L1780.97 155.67 L1780.88 155.86 L1780.80 156.05 L1780.73 156.25 L1780.65 156.44 L1780.59 156.64 L1780.53 156.84 L1780.47 157.04 L1780.43 157.25 L1780.40 157.46 L1780.39 157.68 L1780.40 157.90 L1780.44 158.13 L1780.51 158.38 L1780.63 158.63 L1780.80 158.89 L1781.02 159.17 L1781.30 159.46 L1781.62 159.75 L1781.96 160.05 L1782.32 160.34 L1782.65 160.62 L1782.95 160.88 L1783.21 161.12 L1783.41 161.35 L1783.56 161.56 L1783.68 161.76 L1783.75 161.95 L1783.81 162.13 L1783.84 162.30 L1783.85 162.48 L1783.86 162.65 L1783.86 162.82 L1783.85 162.98 L1783.84 163.15 L1783.83 163.32 L1783.82 163.48 L1783.81 163.65 L1783.79 163.81 L1783.78 163.98 L1783.77 164.14 L1783.75 164.31 L1783.74 164.47 L1783.73 164.64 L1783.73 164.81 L1783.72 164.97 L1783.71 165.14 L1783.71 165.30 L1783.70 165.47 L1783.70 165.63 L1783.70 165.80 L1783.70 165.97 L1783.70 166.13 L1783.71 166.30 L1783.71 166.46 L1783.72 166.63 L1783.73 166.79 L1783.73 166.96 L1783.74 167.13 L1783.75 167.29 L1783.77 167.46 L1783.78 167.62 L1783.79 167.79 L1783.81 167.95 L1783.82 168.12 L1783.83 168.28 L1783.84 168.45 L1783.85 168.62 L1783.86 168.78 L1783.86 168.95 L1783.85 169.12 L1783.84 169.30 L1783.81 169.47 L1783.75 169.65 L1783.68 169.84 L1783.56 170.04 L1783.41 170.25 L1783.21 170.48 L1782.95 170.72 L1782.65 170.98 L1782.32 171.26 L1781.96 171.55 L1781.62 171.85 L1781.30 172.14 L1781.02 172.43 L1780.80 172.71 L1780.63 172.97 L1780.51 173.22 L1780.44 173.47 L1780.40 173.70 L1780.39 173.92 L1780.40 174.14 L1780.43 174.35 L1780.47 174.56 L1780.53 174.76 L1780.59 174.96 L1780.65 175.16 L1780.73 175.35 L1780.80 175.55 L1780.88 175.74 L1780.97 175.93 L1781.05 176.13 L1781.14 176.32 L1781.23 176.50 L1781.32 176.69 L1781.42 176.88 L1781.51 177.07 L1781.61 177.25 L1781.71 177.43 L1781.81 177.62 L1781.92 177.80 L1782.02 177.98 L1782.13 178.16 L1782.24 178.34 L1782.35 178.52 L1782.46 178.69 L1782.58 178.87 L1782.69 179.04 L1782.81 179.21 L1782.93 179.39 L1783.06 179.56 L1783.18 179.72 L1783.31 179.89 L1783.44 180.05 L1783.57 180.21 L1783.71 180.37 L1783.85 180.52 L1784.00 180.67 L1784.16 180.81 L1784.33 180.94 L1784.51 181.06 L1784.71 181.16 L1784.93 181.25 L1785.18 181.30 L1785.46 181.33 L1785.77 181.31 L1786.12 181.26 L1786.51 181.17 L1786.92 181.04 L1787.35 180.88 L1787.78 180.72 L1788.19 180.57 L1788.56 180.44 L1788.90 180.34 L1789.20 180.28 L1789.46 180.25 L1789.69 180.25 L1789.89 180.28 L1790.07 180.33 L1790.24 180.39 L1790.40 180.46 L1790.55 180.54 L1790.70 180.62 L1790.84 180.71 L1790.98 180.80 L1791.11 180.90 L1791.25 180.99 L1791.39 181.09 L1791.52 181.18 L1791.66 181.28 L1791.80 181.37 L1791.94 181.46 L1792.07 181.55 L1792.21 181.64 L1792.35 181.73 L1792.49 181.82 L1792.63 181.91 L1792.77 182.00 L1792.91 182.09 L1793.06 182.17 L1793.20 182.25 L1793.34 182.34 L1793.49 182.42 L1793.63 182.50 L1793.78 182.58 L1793.93 182.65 L1794.07 182.73 L1794.22 182.80 L1794.37 182.88 L1794.52 182.95 L1794.67 183.03 L1794.82 183.10 L1794.97 183.17 L1795.12 183.24 L1795.27 183.31 L1795.42 183.38 L1795.57 183.45 L1795.72 183.53 L1795.86 183.61 L1796.01 183.69 L1796.16 183.78 L1796.30 183.88 L1796.43 184.00 L1796.57 184.14 L1796.69 184.30 L1796.81 184.49 L1796.91 184.73 L1797.01 185.02 L1797.09 185.36 L1797.17 185.75 L1797.24 186.18 L1797.31 186.63 L1797.39 187.08 L1797.49 187.51 L1797.60 187.89 L1797.73 188.22 L1797.88 188.50 L1798.04 188.73 L1798.21 188.91 L1798.39 189.06 L1798.58 189.18 L1798.77 189.28 L1798.97 189.36 L1799.17 189.43 L1799.37 189.48 L1799.58 189.53 L1799.78 189.57 L1799.99 189.61 L1800.19 189.64 L1800.40 189.67 L1800.61 189.69 L1800.82 189.71 L1801.03 189.73 L1801.24 189.75 L1801.44 189.76 L1801.65 189.77 L1801.86 189.78 L1802.07 189.79 L1802.28 189.79 L1802.49 189.80 L1802.70 189.80 L1802.91 189.80 L1803.12 189.79 L1803.33 189.79 L1803.54 189.78 L1803.75 189.77 L1803.96 189.76 L1804.16 189.75 L1804.37 189.73 L1804.58 189.71 L1804.79 189.69 L1805.00 189.67 L1805.21 189.64 L1805.41 189.61 L1805.62 189.57 L1805.82 189.53 L1806.03 189.48 L1806.23 189.43 L1806.43 189.36 L1806.63 189.28 L1806.82 189.18 L1807.01 189.06 L1807.19 188.91 L1807.36 188.73 L1807.52 188.50 L1807.67 188.22 L1807.80 187.89 L1807.91 187.51 L1808.01 187.08 L1808.09 186.63 L1808.16 186.18 L1808.23 185.75 L1808.31 185.36 L1808.39 185.02 L1808.49 184.73 L1808.59 184.49 L1808.71 184.30 L1808.83 184.14 L1808.97 184.00 L1809.10 183.88 L1809.24 183.78 L1809.39 183.69 L1809.54 183.61 L1809.68 183.53 L1809.83 183.45 L1809.98 183.38 L1810.13 183.31 L1810.28 183.24 L1810.43 183.17 L1810.58 183.10 L1810.73 183.03 L1810.88 182.95 L1811.03 182.88 L1811.18 182.80 L1811.33 182.73 L1811.47 182.65 L1811.62 182.58 L1811.77 182.50 L1811.91 182.42 L1812.06 182.34 L1812.20 182.25 L1812.34 182.17 L1812.49 182.09 L1812.63 182.00 L1812.77 181.91 L1812.91 181.82 L1813.05 181.73 L1813.19 181.64 L1813.33 181.55 L1813.46 181.46 L1813.60 181.37 L1813.74 181.28 L1813.88 181.18 L1814.01 181.09 L1814.15 180.99 L1814.29 180.90 L1814.42 180.80 L1814.56 180.71 L1814.70 180.62 L1814.85 180.54 L1815.00 180.46 L1815.16 180.39 L1815.33 180.33 L1815.51 180.28 L1815.71 180.25 L1815.94 180.25 L1816.20 180.28 L1816.50 180.34 L1816.84 180.44 L1817.21 180.57 L1817.62 180.72 L1818.05 180.88 L1818.48 181.04 L1818.89 181.17 L1819.28 181.26 L1819.63 181.31 L1819.94 181.33 L1820.22 181.30 L1820.47 181.25 L1820.69 181.16 L1820.89 181.06 L1821.07 180.94 L1821.24 180.81 L1821.40 180.67 L1821.55 180.52 L1821.69 180.37 L1821.83 180.21 L1821.96 180.05 L1822.09 179.89 L1822.22 179.72 L1822.34 179.56 L1822.47 179.39 L1822.59 179.21 L1822.71 179.04 L1822.82 178.87 L1822.94 178.69 L1823.05 178.52 L1823.16 178.34 L1823.27 178.16 L1823.38 177.98 L1823.48 177.80 L1823.59 177.62 L1823.69 177.43 L1823.79 177.25 L1823.89 177.07 L1823.98 176.88 L1824.08 176.69 L1824.17 176.50 L1824.26 176.32 L1824.35 176.13 L1824.43 175.93 L1824.52 175.74 L1824.60 175.55 L1824.67 175.35 L1824.75 175.16 L1824.81 174.96 L1824.87 174.76 L1824.93 174.56 L1824.97 174.35 L1825.00 174.14 L1825.01 173.92 L1825.00 173.70 L1824.96 173.47 L1824.89 173.22 L1824.77 172.97 L1824.60 172.71 L1824.38 172.43 L1824.10 172.14 L1823.78 171.85 L1823.44 171.55 L1823.08 171.26 L1822.75 170.98 L1822.45 170.72 L1822.19 170.48 L1821.99 170.25 L1821.84 170.04 L1821.72 169.84 L1821.65 169.65 L1821.59 169.47 L1821.56 169.30 L1821.55 169.12 L1821.54 168.95 L1821.54 168.78 L1821.55 168.62 L1821.56 168.45 L1821.57 168.28 L1821.58 168.12 L1821.59 167.95 L1821.61 167.79 L1821.62 167.62 L1821.63 167.46 L1821.65 167.29 L1821.66 167.13 L1821.67 166.96 L1821.67 166.79 L1821.68 166.63 L1821.69 166.46 L1821.69 166.30 L1821.70 166.13 L1821.70 165.97 Z" fill="none" stroke="#0e61f6" stroke-width="2.9" stroke-linejoin="round"/><circle cx="1802.7" cy="165.8" r="8" fill="none" stroke="#0e61f6" stroke-width="2.9"/><path d="M1919.3 141.9 H1897.9 V179.9 H1916.1" stroke="#1f6fbe" stroke-width="3.4" fill="none"/>
<path d="M1918.6 141.9 L1927.8 151.6 V160.7" stroke="#1f6fbe" stroke-width="3.4" fill="none"/>
<path d="M1917.8 142 V153.6 H1927" stroke="#1f6fbe" stroke-width="3" fill="none"/>
<path d="M1924.6 164.1 H1933.7 L1929.3 175.3 H1933.7 L1919.8 191.6 L1923.2 179.9 H1919.5 Z" fill="#0a5ba8"/>
<path d="M2003.2 264.3 L2010.2 271.6 L2017.2 264.3" stroke="#2e2e2e" stroke-width="1.7" fill="none"/><circle cx="64.75" cy="338.85" r="12" fill="#f4f4f4" stroke="#2b88d8" stroke-width="1.6"/>
<rect x="63.1" y="332.6" width="3.1" height="3" fill="#1e7fd0"/>
<rect x="63.1" y="338" width="3.1" height="7.7" fill="#1e7fd0"/>
<path d="M81.6 411.2 L115 425.4 L81.6 439.3 L87.4 425.4 Z" fill="#f4f4f4" stroke="#333" stroke-width="1.7" stroke-linejoin="round"/>
<path d="M87.4 425.4 H115" stroke="#333" stroke-width="1.6"/>
<g stroke="#333" stroke-width="1.6" fill="none">
<rect x="531.5" y="606.9" width="24" height="22.2" fill="#f4f4f4"/>
<path d="M531.5 612.1 H555.5 M536.3 604.1 V608.9 M550.8 604.1 V608.9"/>
</g>
<rect x="538.9" y="619.1" width="3" height="2.8" fill="#333"/>
<path d="M734.8 613.6 H749.2 L742 621 Z" fill="#5a5a5a" stroke="#5a5a5a" stroke-width="0.8" stroke-linejoin="round"/><g stroke="#333" stroke-width="1.6" fill="none">
<rect x="531.5" y="661.9" width="24" height="22.2" fill="#f4f4f4"/>
<path d="M531.5 667.1 H555.5 M536.3 659.1 V663.9 M550.8 659.1 V663.9"/>
</g>
<rect x="538.9" y="674.1" width="3" height="2.8" fill="#333"/>
<path d="M734.8 668.6 H749.2 L742 676 Z" fill="#5a5a5a" stroke="#5a5a5a" stroke-width="0.8" stroke-linejoin="round"/><circle cx="943.2" cy="615.6" r="7.9" fill="#2b88d8"/>
<g stroke="#fff" stroke-width="0.9" opacity="0.9">
<path d="M937 609.5 L941 622.5 M942.5 608 L946.5 622 M937 613 L950 609.5 M936 618.5 L950.5 614.5 M937.5 622 L949 619"/>
</g>
<path d="M942.2 604.9 A11 11 0 1 0 950.8 623.3" stroke="#333" stroke-width="1.6" fill="none"/>
<path d="M942.4 625.9 V629.3 M933.4 629.6 H951" stroke="#333" stroke-width="1.6" fill="none"/>
<g stroke="#1f6fc5" stroke-width="1.9" fill="none" stroke-linecap="round">
<path d="M792.6 666.9 A8.6 8.6 0 0 1 808.6 672.5"/>
<path d="M805.5 671.2 L808.9 674.4 L812.2 671.2"/>
<path d="M807.2 677.6 A8.6 8.6 0 0 1 791.2 671.5"/>
<path d="M787.6 673.4 L791.1 669.9 L794.6 673.4"/>
</g><path d="M1845.5 738.5 V732.4 H1830 V756 H1845.5 V755.2" stroke="#333" stroke-width="1.6" fill="#f4f4f4"/>
<circle cx="1833.5" cy="744.4" r="1.3" fill="#333"/>
<circle cx="1844.2" cy="746.9" r="5.1" fill="#f4f4f4" stroke="#2b88d8" stroke-width="1.6"/>
<path d="M1848 750.8 L1854.3 757" stroke="#2b88d8" stroke-width="1.7"/>
<path d="M2003.8 806 H2017.2 L2010.5 796.6 Z" fill="#6e6e6e" stroke="#6e6e6e" stroke-width="1" stroke-linejoin="round"/>
<rect x="2004" y="815" width="13" height="3.8" rx="1.9" fill="#6e6e6e"/>
<path d="M2003.8 827.3 H2017.2 L2010.5 837.7 Z" fill="#6e6e6e" stroke="#6e6e6e" stroke-width="1" stroke-linejoin="round"/><g stroke="#333" stroke-width="1.5" fill="none">
<path d="M196.3 854.6 A10 10 0 0 0 190.4 864.4 M203 854.6 A10 10 0 0 1 209.2 864.4 M194 871.3 A10 10 0 0 0 205.6 871.3"/>
<circle cx="199.6" cy="853.6" r="3.6" fill="#fdfdfd"/>
<circle cx="190.9" cy="868.1" r="3.6" fill="#fdfdfd"/>
<circle cx="208.8" cy="868.1" r="3.6" fill="#fdfdfd"/>
</g></svg>
</body></html>
